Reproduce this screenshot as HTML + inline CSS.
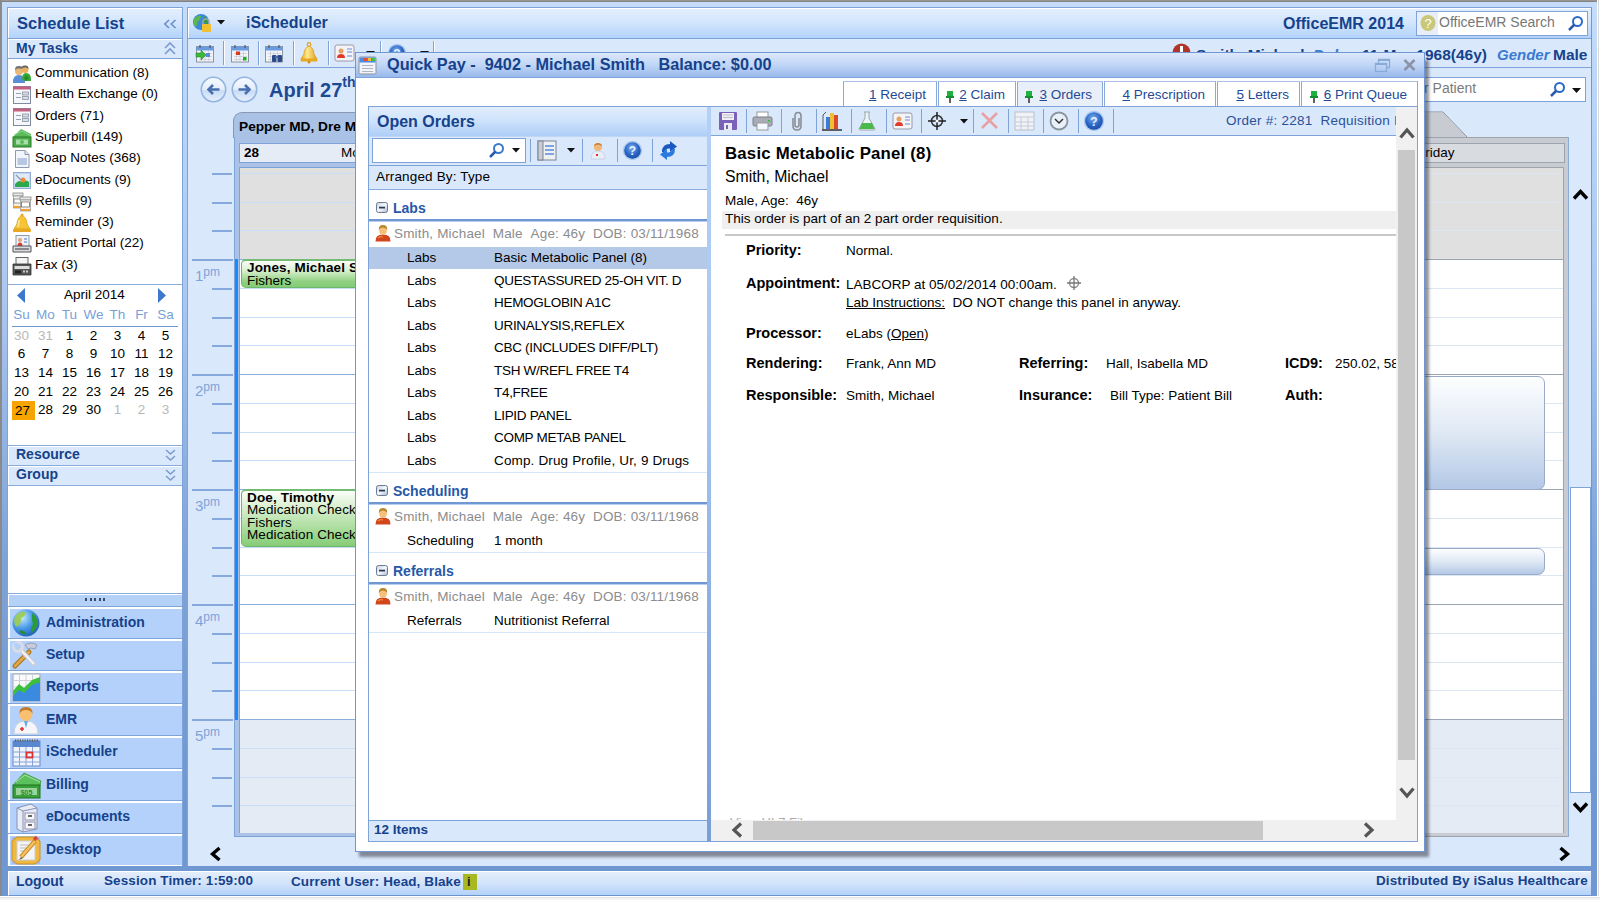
<!DOCTYPE html>
<html><head><meta charset="utf-8">
<style>
*{box-sizing:border-box;margin:0;padding:0}
html,body{width:1600px;height:900px;overflow:hidden}
body{position:relative;background:linear-gradient(#c5ddfa 0px,#b9d5f8 100px,#a9c7f0 300px,#7ea3d8 560px,#6f97d2 800px);font-family:"Liberation Sans",sans-serif;font-size:13px;color:#000}
.a{position:absolute}
.b{font-weight:bold}
.db{color:#15428b}
.nw{white-space:nowrap}
/* frame */
#frameL{left:0;top:0;width:2px;height:900px;background:#8a8a8a}
#frameT{left:0;top:0;width:1598px;height:2px;background:linear-gradient(#a0a0a0,#7a7a7a)}
#frameR{left:1597px;top:0;width:3px;height:900px;background:linear-gradient(90deg,#fff 0 1px,#d8d8d8 1px 2px,#fff 2px)}
.hdrgrad{background:linear-gradient(#e2eefd,#d4e6fc 45%,#b2d2fb)}
</style></head><body>
<div class="a" id="frameT"></div><div class="a" id="frameL"></div><div class="a" id="frameR"></div>


<!-- LEFT PANEL -->
<div class="a" style="left:7px;top:7px;width:176px;height:859px;background:#fff;border:1px solid #7ea3d8;border-bottom:none"></div>
<div class="a hdrgrad" style="left:8px;top:8px;width:174px;height:30px;border-top:1px solid #fff;border-left:1px solid #fff"></div>
<div class="a b db nw" style="left:17px;top:13px;font-size:16.5px;line-height:20px">Schedule List</div>
<svg class="a" style="left:163px;top:19px" width="15" height="10"><path d="M6 1 L1.8 5 L6 9 M12.5 1 L8.3 5 L12.5 9" stroke="#6d90cc" stroke-width="1.7" fill="none"/></svg>
<div class="a" style="left:8px;top:38px;width:174px;height:1px;background:#7ea3d8"></div>
<div class="a" style="left:8px;top:39px;width:174px;height:19px;background:#dae8fb;border-top:1px solid #fff;border-left:1px solid #fff"></div>
<div class="a b db nw" style="left:16px;top:40px;font-size:14px;line-height:17px">My Tasks</div>
<svg class="a" style="left:163px;top:42px" width="14" height="14"><path d="M2 6 L7 1 L12 6 M2 12 L7 7 L12 12" stroke="#7a9ad0" stroke-width="1.6" fill="none"/></svg>
<div class="a" style="left:8px;top:58px;width:174px;height:1px;background:#7ea3d8"></div>
<svg class="a" style="left:12px;top:63.5px" width="20" height="20"><circle cx="7" cy="7" r="4" fill="#e8b878"/><path d="M3 6 Q3 1.5 7 2 Q11 1.5 11 6 Q9 4 7 4.5 Q5 4 3 6Z" fill="#777"/><path d="M1 19 Q0.5 11 7 11 Q13 11 13 19Z" fill="#5a8ed8"/><circle cx="13" cy="5.5" r="3.5" fill="#e8b060"/><path d="M9.5 5 Q9.5 1 13 1.5 Q16.5 1 16.5 5 Q15 3 13 3.5 Q11 3 9.5 5Z" fill="#666"/><path d="M10 15 Q10 9 14 9 Q19 9 19 15 L19 17 L12 17Z" fill="#38a838"/><path d="M14 11 L17 14 L14 17 L12 14Z" fill="#2a8a2a"/></svg><div class="a nw" style="left:35px;top:64px;font-size:13.5px;line-height:17px">Communication (8)</div>
<svg class="a" style="left:12px;top:84.5px" width="20" height="20"><rect x="1.5" y="1.5" width="17" height="17" fill="#f6f7fa" stroke="#7d8aa0"/><rect x="1.5" y="1.5" width="17" height="3" fill="#c4607e"/><path d="M4 8.5H9M4 12.5H9" stroke="#9aa2b0" stroke-width="1.2"/><rect x="10.5" y="7" width="6" height="3" fill="#d8dde6" stroke="#8a94a4" stroke-width="0.8"/><rect x="10.5" y="11.5" width="6" height="3" fill="#d8dde6" stroke="#8a94a4" stroke-width="0.8"/></svg><div class="a nw" style="left:35px;top:85px;font-size:13.5px;line-height:17px">Health Exchange (0)</div>
<svg class="a" style="left:12px;top:106.5px" width="20" height="20"><rect x="1.5" y="1.5" width="17" height="17" fill="#f6f7fa" stroke="#7d8aa0"/><rect x="1.5" y="1.5" width="17" height="3" fill="#c4607e"/><path d="M4 8.5H9M4 12.5H9" stroke="#9aa2b0" stroke-width="1.2"/><rect x="10.5" y="7" width="6" height="3" fill="#d8dde6" stroke="#8a94a4" stroke-width="0.8"/><rect x="10.5" y="11.5" width="6" height="3" fill="#d8dde6" stroke="#8a94a4" stroke-width="0.8"/></svg><div class="a nw" style="left:35px;top:107px;font-size:13.5px;line-height:17px">Orders (71)</div>
<svg class="a" style="left:12px;top:127.5px" width="20" height="20"><path d="M1 9 L9 1 L19 6 L19 12 L1 12Z" fill="#5cba5c"/><path d="M2 7 L10 3 L19 8" stroke="#8ad88a" fill="none"/><rect x="1" y="9" width="18" height="10" fill="#4aaa4a" stroke="#2a7a2a" stroke-width="1"/><rect x="4" y="11.5" width="12" height="5" fill="#a8dca8"/><circle cx="10" cy="14" r="2" fill="#5cba5c"/></svg><div class="a nw" style="left:35px;top:128px;font-size:13.5px;line-height:17px">Superbill (149)</div>
<svg class="a" style="left:12px;top:148.5px" width="20" height="20"><path d="M3.5 1.5 L13 1.5 L17 5.5 L17 18.5 L3.5 18.5Z" fill="#f2f5fa" stroke="#8c9ab2"/><path d="M13 1.5 V5.5 H17" fill="#dde4f0" stroke="#8c9ab2"/><rect x="5.5" y="9" width="9.5" height="7" fill="#b8c8e2"/></svg><div class="a nw" style="left:35px;top:149px;font-size:13.5px;line-height:17px">Soap Notes (368)</div>
<svg class="a" style="left:12px;top:170.5px" width="20" height="20"><rect x="1.5" y="1.5" width="17" height="16" fill="#c4d6f0" stroke="#94aed8"/><rect x="3" y="3" width="14" height="13" fill="#e0eaf6"/><path d="M3 13 Q7 8 10 11 Q14 8 17 11 V16 H3Z" fill="#2aa84a"/><circle cx="11" cy="9" r="2.5" fill="#f08a30"/><path d="M4 4 L9 9" stroke="#8a9ab0" stroke-width="1.2"/></svg><div class="a nw" style="left:35px;top:171px;font-size:13.5px;line-height:17px">eDocuments (9)</div>
<svg class="a" style="left:12px;top:191.5px" width="20" height="20"><rect x="1" y="1" width="10" height="3" fill="#e8e8e8" stroke="#888" stroke-width="0.8"/><rect x="1.5" y="4" width="9" height="12" fill="#f4f0e8" stroke="#999" stroke-width="0.8"/><rect x="2" y="7" width="8" height="4" fill="#fff" stroke="#555" stroke-width="0.6"/><rect x="2" y="14" width="8" height="2" fill="#f0a030"/><rect x="8" y="5" width="11" height="3" fill="#e8e8e8" stroke="#888" stroke-width="0.8"/><rect x="8.5" y="8" width="10" height="11" fill="#f4f0e8" stroke="#999" stroke-width="0.8"/><rect x="9.5" y="10" width="8" height="5" fill="#fff" stroke="#444" stroke-width="0.6"/><rect x="9" y="17" width="9" height="2" fill="#f0a030"/></svg><div class="a nw" style="left:35px;top:192px;font-size:13.5px;line-height:17px">Refills (9)</div>
<svg class="a" style="left:12px;top:212.5px" width="20" height="20"><path d="M10 2 Q5 5 5 11 L2 16 L18 16 L15 11 Q15 5 10 2Z" fill="#f6c434" stroke="#dca020" stroke-width="0.8"/><rect x="1" y="16" width="18" height="3" rx="1" fill="#e8a824"/><circle cx="10" cy="2" r="1.5" fill="#e8a824"/><path d="M7 7 Q7 12 6 14" stroke="#fde9a0" stroke-width="1.5" fill="none"/></svg><div class="a nw" style="left:35px;top:213px;font-size:13.5px;line-height:17px">Reminder (3)</div>
<svg class="a" style="left:12px;top:233.5px" width="20" height="20"><rect x="4" y="1.5" width="13" height="12" fill="#eef2f8" stroke="#8a9ab0"/><circle cx="8" cy="6" r="2" fill="#e8a070"/><path d="M5.5 12 Q5.5 8.5 8 8.5 Q10.5 8.5 10.5 12Z" fill="#d8402a"/><path d="M12 5H15M12 8H15" stroke="#4a7ad0"/><path d="M1 12 H19 V18 H1Z" fill="#d8dce2" stroke="#555" stroke-width="1"/><rect x="3" y="14" width="14" height="2" fill="#888"/></svg><div class="a nw" style="left:35px;top:234px;font-size:13.5px;line-height:17px">Patient Portal (22)</div>
<svg class="a" style="left:12px;top:255.5px" width="20" height="20"><rect x="4" y="1.5" width="12" height="7" fill="#f4f4f4" stroke="#666"/><path d="M1 8 H19 V19 H1Z" fill="#555" stroke="#333" stroke-width="0.8"/><rect x="2.5" y="10" width="15" height="3" fill="#ddd"/><rect x="3" y="14.5" width="6" height="3" fill="#222"/><rect x="11" y="14.5" width="2" height="2" fill="#ccc"/><rect x="14" y="14.5" width="2" height="2" fill="#ccc"/></svg><div class="a nw" style="left:35px;top:256px;font-size:13.5px;line-height:17px">Fax (3)</div>
<div class="a" style="left:8px;top:284px;width:174px;height:1px;background:#8aacdc"></div>
<svg class="a" style="left:16px;top:288px" width="10" height="15"><path d="M9 0 L1 7.5 L9 15Z" fill="#3d78cc"/></svg>
<svg class="a" style="left:157px;top:288px" width="10" height="15"><path d="M1 0 L9 7.5 L1 15Z" fill="#3d78cc"/></svg>
<div class="a nw" style="left:64px;top:287px;font-size:13.5px;line-height:16px">April 2014</div>
<div class="a" style="left:12px;top:326px;width:166px;height:1px;background:#6f97d2"></div>
<div class="a nw" style="left:9.5px;top:307px;width:24px;text-align:center;font-size:13.5px;line-height:16px;color:#7a9fd8">Su</div><div class="a nw" style="left:33.5px;top:307px;width:24px;text-align:center;font-size:13.5px;line-height:16px;color:#7a9fd8">Mo</div><div class="a nw" style="left:57.5px;top:307px;width:24px;text-align:center;font-size:13.5px;line-height:16px;color:#7a9fd8">Tu</div><div class="a nw" style="left:81.5px;top:307px;width:24px;text-align:center;font-size:13.5px;line-height:16px;color:#7a9fd8">We</div><div class="a nw" style="left:105.5px;top:307px;width:24px;text-align:center;font-size:13.5px;line-height:16px;color:#7a9fd8">Th</div><div class="a nw" style="left:129.5px;top:307px;width:24px;text-align:center;font-size:13.5px;line-height:16px;color:#7a9fd8">Fr</div><div class="a nw" style="left:153.5px;top:307px;width:24px;text-align:center;font-size:13.5px;line-height:16px;color:#7a9fd8">Sa</div><div class="a nw" style="left:10.0px;top:325.5px;width:23px;height:19px;text-align:center;font-size:13.5px;line-height:19px;color:#b8b8b8;">30</div><div class="a nw" style="left:34.0px;top:325.5px;width:23px;height:19px;text-align:center;font-size:13.5px;line-height:19px;color:#b8b8b8;">31</div><div class="a nw" style="left:58.0px;top:325.5px;width:23px;height:19px;text-align:center;font-size:13.5px;line-height:19px;color:#000;">1</div><div class="a nw" style="left:82.0px;top:325.5px;width:23px;height:19px;text-align:center;font-size:13.5px;line-height:19px;color:#000;">2</div><div class="a nw" style="left:106.0px;top:325.5px;width:23px;height:19px;text-align:center;font-size:13.5px;line-height:19px;color:#000;">3</div><div class="a nw" style="left:130.0px;top:325.5px;width:23px;height:19px;text-align:center;font-size:13.5px;line-height:19px;color:#000;">4</div><div class="a nw" style="left:154.0px;top:325.5px;width:23px;height:19px;text-align:center;font-size:13.5px;line-height:19px;color:#000;">5</div>
<div class="a nw" style="left:10.0px;top:344.2px;width:23px;height:19px;text-align:center;font-size:13.5px;line-height:19px;color:#000;">6</div><div class="a nw" style="left:34.0px;top:344.2px;width:23px;height:19px;text-align:center;font-size:13.5px;line-height:19px;color:#000;">7</div><div class="a nw" style="left:58.0px;top:344.2px;width:23px;height:19px;text-align:center;font-size:13.5px;line-height:19px;color:#000;">8</div><div class="a nw" style="left:82.0px;top:344.2px;width:23px;height:19px;text-align:center;font-size:13.5px;line-height:19px;color:#000;">9</div><div class="a nw" style="left:106.0px;top:344.2px;width:23px;height:19px;text-align:center;font-size:13.5px;line-height:19px;color:#000;">10</div><div class="a nw" style="left:130.0px;top:344.2px;width:23px;height:19px;text-align:center;font-size:13.5px;line-height:19px;color:#000;">11</div><div class="a nw" style="left:154.0px;top:344.2px;width:23px;height:19px;text-align:center;font-size:13.5px;line-height:19px;color:#000;">12</div>
<div class="a nw" style="left:10.0px;top:362.9px;width:23px;height:19px;text-align:center;font-size:13.5px;line-height:19px;color:#000;">13</div><div class="a nw" style="left:34.0px;top:362.9px;width:23px;height:19px;text-align:center;font-size:13.5px;line-height:19px;color:#000;">14</div><div class="a nw" style="left:58.0px;top:362.9px;width:23px;height:19px;text-align:center;font-size:13.5px;line-height:19px;color:#000;">15</div><div class="a nw" style="left:82.0px;top:362.9px;width:23px;height:19px;text-align:center;font-size:13.5px;line-height:19px;color:#000;">16</div><div class="a nw" style="left:106.0px;top:362.9px;width:23px;height:19px;text-align:center;font-size:13.5px;line-height:19px;color:#000;">17</div><div class="a nw" style="left:130.0px;top:362.9px;width:23px;height:19px;text-align:center;font-size:13.5px;line-height:19px;color:#000;">18</div><div class="a nw" style="left:154.0px;top:362.9px;width:23px;height:19px;text-align:center;font-size:13.5px;line-height:19px;color:#000;">19</div>
<div class="a nw" style="left:10.0px;top:381.6px;width:23px;height:19px;text-align:center;font-size:13.5px;line-height:19px;color:#000;">20</div><div class="a nw" style="left:34.0px;top:381.6px;width:23px;height:19px;text-align:center;font-size:13.5px;line-height:19px;color:#000;">21</div><div class="a nw" style="left:58.0px;top:381.6px;width:23px;height:19px;text-align:center;font-size:13.5px;line-height:19px;color:#000;">22</div><div class="a nw" style="left:82.0px;top:381.6px;width:23px;height:19px;text-align:center;font-size:13.5px;line-height:19px;color:#000;">23</div><div class="a nw" style="left:106.0px;top:381.6px;width:23px;height:19px;text-align:center;font-size:13.5px;line-height:19px;color:#000;">24</div><div class="a nw" style="left:130.0px;top:381.6px;width:23px;height:19px;text-align:center;font-size:13.5px;line-height:19px;color:#000;">25</div><div class="a nw" style="left:154.0px;top:381.6px;width:23px;height:19px;text-align:center;font-size:13.5px;line-height:19px;color:#000;">26</div>
<div class="a nw" style="left:12px;top:400.5px;width:23px;height:19px;text-align:center;font-size:13.5px;line-height:19px;color:#000;background:#f7a400;padding-right:2px;">27</div><div class="a nw" style="left:34.0px;top:400.3px;width:23px;height:19px;text-align:center;font-size:13.5px;line-height:19px;color:#000;">28</div><div class="a nw" style="left:58.0px;top:400.3px;width:23px;height:19px;text-align:center;font-size:13.5px;line-height:19px;color:#000;">29</div><div class="a nw" style="left:82.0px;top:400.3px;width:23px;height:19px;text-align:center;font-size:13.5px;line-height:19px;color:#000;">30</div><div class="a nw" style="left:106.0px;top:400.3px;width:23px;height:19px;text-align:center;font-size:13.5px;line-height:19px;color:#b8b8b8;">1</div><div class="a nw" style="left:130.0px;top:400.3px;width:23px;height:19px;text-align:center;font-size:13.5px;line-height:19px;color:#b8b8b8;">2</div><div class="a nw" style="left:154.0px;top:400.3px;width:23px;height:19px;text-align:center;font-size:13.5px;line-height:19px;color:#b8b8b8;">3</div>

<div class="a" style="left:8px;top:445px;width:174px;height:1px;background:#8aacdc"></div>
<div class="a" style="left:8px;top:446px;width:174px;height:19px;background:#dae8fb;border-top:1px solid #fff;border-left:1px solid #fff"></div>
<div class="a b db nw" style="left:16px;top:446px;font-size:14px;line-height:17px">Resource</div>
<div class="a" style="left:8px;top:465px;width:174px;height:1px;background:#8aacdc"></div>
<div class="a" style="left:8px;top:466px;width:174px;height:19px;background:#dae8fb;border-top:1px solid #fff;border-left:1px solid #fff"></div>
<div class="a b db nw" style="left:16px;top:466px;font-size:14px;line-height:17px">Group</div>
<div class="a" style="left:8px;top:485px;width:174px;height:1px;background:#8aacdc"></div>
<svg class="a" style="left:164px;top:448px" width="13" height="14"><path d="M2 2 L6.5 6 L11 2 M2 8 L6.5 12 L11 8" stroke="#7a9ad0" stroke-width="1.5" fill="none"/></svg>
<svg class="a" style="left:164px;top:468px" width="13" height="14"><path d="M2 2 L6.5 6 L11 2 M2 8 L6.5 12 L11 8" stroke="#7a9ad0" stroke-width="1.5" fill="none"/></svg>
<div class="a" style="left:8px;top:593px;width:174px;height:1px;background:#8aacdc"></div>
<div class="a" style="left:8px;top:594px;width:174px;height:12px;background:#b4d1f8;border-top:1px solid #fff;border-left:1px solid #fff"></div>
<div class="a" style="left:85px;top:598px;width:22px;height:3px;background:repeating-linear-gradient(90deg,#3a4a6a 0 2px,transparent 2px 4.5px)"></div>
<div class="a" style="left:8px;top:606px;width:174px;height:1px;background:#7ea3d8"></div><div class="a" style="left:8px;top:607px;width:174px;height:31px;background:#b3d1fa;border-top:2px solid #fff;border-left:2px solid #fff"></div><svg class="a" style="left:11px;top:608px" width="31" height="31"><defs><radialGradient id="gl" cx="0.35" cy="0.3" r="0.8"><stop offset="0" stop-color="#c8ecff"/><stop offset="0.5" stop-color="#4a9ae8"/><stop offset="1" stop-color="#1a5ab0"/></radialGradient></defs><circle cx="15" cy="15" r="13.5" fill="url(#gl)"/><path d="M4 9 Q8 3 14 4 Q15 7 12 9 Q9 10 10 14 Q8 18 5 19 Q2 14 4 9Z" fill="#9ccc4a" opacity="0.9"/><path d="M21 5 Q27 9 27 17 Q24 22 21 25 Q19 20 22 16 Q20 11 21 5Z" fill="#2a9a3a"/><path d="M8 24 Q12 27 16 26 Q14 23 10 22Z" fill="#2a8a3a"/></svg><div class="a b db nw" style="left:46px;top:614px;font-size:14px;line-height:17px">Administration</div>
<div class="a" style="left:8px;top:638px;width:174px;height:1px;background:#7ea3d8"></div><div class="a" style="left:8px;top:639px;width:174px;height:31px;background:#b3d1fa;border-top:2px solid #fff;border-left:2px solid #fff"></div><svg class="a" style="left:11px;top:640px" width="31" height="31"><path d="M4 26 L18 12" stroke="#b07820" stroke-width="5" stroke-linecap="round"/><path d="M4 26 L18 12" stroke="#e0a848" stroke-width="2.5" stroke-linecap="round"/><path d="M14 5 Q20 1 26 5 L24 9 Q20 7 17 9Z" fill="#c8ccdc" stroke="#8a90a8" stroke-width="0.8"/><path d="M9 9 L23 24" stroke="#c8ccd8" stroke-width="4.5" stroke-linecap="round"/><path d="M9 9 L23 24" stroke="#f4f4f8" stroke-width="2"/><circle cx="7" cy="7" r="4.5" fill="none" stroke="#d8dce8" stroke-width="3"/><rect x="3" y="3" width="4" height="4" fill="#b3d1fa"/></svg><div class="a b db nw" style="left:46px;top:646px;font-size:14px;line-height:17px">Setup</div>
<div class="a" style="left:8px;top:670px;width:174px;height:1px;background:#7ea3d8"></div><div class="a" style="left:8px;top:671px;width:174px;height:32px;background:#b3d1fa;border-top:2px solid #fff;border-left:2px solid #fff"></div><svg class="a" style="left:11px;top:672px" width="31" height="31"><rect x="2" y="2" width="27" height="27" fill="#fafafa" stroke="#a8aab0"/><path d="M2 8.5H29M2 15H29M2 21.5H29M8.5 2V29M15 2V29M21.5 2V29" stroke="#d0d2d8"/><path d="M2 22 L8 16 L13 19 L21 11 L29 9 V29 H2Z" fill="#3a8ae0"/><path d="M2 19 L8 12 L13 16 L21 8 L29 5 L29 10 L21 13 L13 21 L8 18 L2 24Z" fill="#3cc03c"/></svg><div class="a b db nw" style="left:46px;top:678px;font-size:14px;line-height:17px">Reports</div>
<div class="a" style="left:8px;top:703px;width:174px;height:1px;background:#7ea3d8"></div><div class="a" style="left:8px;top:704px;width:174px;height:31px;background:#b3d1fa;border-top:2px solid #fff;border-left:2px solid #fff"></div><svg class="a" style="left:11px;top:705px" width="31" height="31"><path d="M3 29 Q3 16 15 16 Q27 16 27 29Z" fill="#f4f6fa" stroke="#c8d0dc"/><path d="M13 16 L15 23 L17 16Z" fill="#6aa8e8"/><circle cx="15" cy="9.5" r="6.5" fill="#f8c070"/><path d="M8.5 9 Q8 2 15 2 Q22 2 21.5 9 Q20 5 15 5 Q10 5 8.5 9Z" fill="#c07a28"/><path d="M9 24 H13 M11 22 V26" stroke="#e03030" stroke-width="1.6"/></svg><div class="a b db nw" style="left:46px;top:711px;font-size:14px;line-height:17px">EMR</div>
<div class="a" style="left:8px;top:735px;width:174px;height:1px;background:#7ea3d8"></div><div class="a" style="left:8px;top:736px;width:174px;height:32px;background:#b3d1fa;border-top:2px solid #fff;border-left:2px solid #fff"></div><svg class="a" style="left:11px;top:737px" width="31" height="31"><rect x="2" y="4" width="27" height="25" fill="#f0f4fc" stroke="#6a8ac8"/><rect x="2" y="4" width="27" height="6" fill="#5a88d0"/><path d="M4 3.5H27" stroke="#555" stroke-dasharray="1.2 1.2" stroke-width="2"/><path d="M2 15H29M2 20H29M2 25H29M8.5 10V29M15 10V29M21.5 10V29" stroke="#8aa4d8"/><rect x="15.5" y="15.5" width="6" height="5" fill="none" stroke="#e03030" stroke-width="1.8"/></svg><div class="a b db nw" style="left:46px;top:743px;font-size:14px;line-height:17px">iScheduler</div>
<div class="a" style="left:8px;top:768px;width:174px;height:1px;background:#7ea3d8"></div><div class="a" style="left:8px;top:769px;width:174px;height:31px;background:#b3d1fa;border-top:2px solid #fff;border-left:2px solid #fff"></div><svg class="a" style="left:11px;top:770px" width="31" height="31"><path d="M3 14 L13 3 L30 11 L28 20 L3 20Z" fill="#5cc05c" stroke="#3a9a3a" stroke-width="0.8"/><path d="M5 12 L14 5 L29 12" stroke="#a8e0a8" fill="none"/><rect x="2" y="15" width="27" height="13" fill="#3aa03a" stroke="#1e701e"/><rect x="5" y="18" width="21" height="7" fill="#9ad49a"/><text x="15.5" y="24.5" font-family="Liberation Sans" font-size="7" font-weight="bold" fill="#2a8a2a" text-anchor="middle">$05</text></svg><div class="a b db nw" style="left:46px;top:776px;font-size:14px;line-height:17px">Billing</div>
<div class="a" style="left:8px;top:800px;width:174px;height:1px;background:#7ea3d8"></div><div class="a" style="left:8px;top:801px;width:174px;height:32px;background:#b3d1fa;border-top:2px solid #fff;border-left:2px solid #fff"></div><svg class="a" style="left:11px;top:802px" width="31" height="31"><path d="M6 6 L20 2 L26 6 L26 27 L12 30 L6 27Z" fill="#e8ecf6" stroke="#8a90b0"/><path d="M6 6 L12 9 L26 6 M12 9 V30" stroke="#8a90b0" fill="none"/><rect x="14" y="11" width="10" height="7" fill="#f8f8fc" stroke="#8a90b0"/><rect x="14" y="20" width="10" height="7" fill="#f8f8fc" stroke="#8a90b0"/><rect x="17" y="13" width="4" height="2" fill="#666"/><rect x="17" y="22" width="4" height="2" fill="#666"/></svg><div class="a b db nw" style="left:46px;top:808px;font-size:14px;line-height:17px">eDocuments</div>
<div class="a" style="left:8px;top:833px;width:174px;height:1px;background:#7ea3d8"></div><div class="a" style="left:8px;top:834px;width:174px;height:31px;background:#b3d1fa;border-top:2px solid #fff;border-left:2px solid #fff"></div><svg class="a" style="left:11px;top:835px" width="31" height="31"><rect x="1" y="2" width="28" height="27" fill="#a8b8e8"/><path d="M1 6 L6 2 H24 L29 6 V25 L24 29 H6 L1 25Z" fill="#f0b840" stroke="#c89020"/><rect x="6" y="6" width="18" height="19" fill="#f4f4f6" stroke="#ccc"/><path d="M9 10H17M9 13H15M9 16H14" stroke="#bbb"/><path d="M10 22 L24 6" stroke="#c88a20" stroke-width="4.5"/><path d="M10 22 L24 6" stroke="#f4c060" stroke-width="2.5"/><path d="M10 22 L8 25 L12 23Z" fill="#555"/><path d="M23 5 L26 2" stroke="#e04040" stroke-width="3.5"/></svg><div class="a b db nw" style="left:46px;top:841px;font-size:14px;line-height:17px">Desktop</div>

<!-- MAIN PANEL -->
<div class="a" style="left:187px;top:7px;width:1405px;height:859px;background:#dae8fc;border:1px solid #7ea3d8;border-right:1px solid #6f97d2;border-bottom:none"></div>
<div class="a hdrgrad" style="left:188px;top:8px;width:1403px;height:30px;border-top:1px solid #fff;border-left:1px solid #fff"></div>
<div class="a" style="left:188px;top:38px;width:1403px;height:1px;background:#7ea3d8"></div>
<svg class="a" style="left:192px;top:13px" width="20" height="20"><circle cx="9" cy="9" r="8" fill="#3a8ad8"/><path d="M2 6 Q5 2 9 3 Q8 8 5 9 Q6 13 3 14 Q1 10 2 6Z" fill="#5cb84a"/><path d="M12 3 Q16 6 16 11 Q13 12 12 9Z" fill="#3a9a3a"/><path d="M11 12 V9 Q11 6 14 6 Q17 6 17 9 V12" fill="none" stroke="#9aa" stroke-width="1.5"/><rect x="10" y="11" width="9" height="8" rx="1" fill="#f0c030"/></svg>
<svg class="a" style="left:217px;top:20px" width="8" height="5"><path d="M0 0 H8 L4 4.5Z" fill="#111"/></svg>
<div class="a b db nw" style="left:246px;top:13px;font-size:16px;line-height:20px">iScheduler</div>
<div class="a b db nw" style="left:1283px;top:14px;font-size:16px;line-height:20px">OfficeEMR 2014</div>
<div class="a" style="left:1416px;top:11px;width:172px;height:25px;background:#fff;border:1px solid #7ea3d8"></div>
<div class="a" style="left:1417px;top:12px;width:21px;height:23px;background:#e8eef8"></div>
<svg class="a" style="left:1419px;top:14px" width="18" height="18"><ellipse cx="9" cy="9" rx="7.5" ry="8" fill="#c8c878"/><text x="9" y="14" font-family="Liberation Sans" font-size="13" fill="#fff" text-anchor="middle">?</text></svg>
<div class="a nw" style="left:1439px;top:14px;font-size:14px;line-height:17px;color:#777">OfficeEMR Search</div>
<svg class="a" style="left:1567px;top:15px" width="17" height="17"><circle cx="10.5" cy="6.5" r="4.5" fill="none" stroke="#2a6ac8" stroke-width="2"/><path d="M7.5 9.5 L2 15" stroke="#2a5aa8" stroke-width="2.5"/></svg>
<!-- toolbar -->
<div class="a" style="left:188px;top:39px;width:1403px;height:28px;background:#dae8fc"></div>
<div class="a" style="left:188px;top:67px;width:1403px;height:1px;background:#7ea3d8"></div>
<div class="a" style="left:223px;top:41px;width:1px;height:24px;background:#7ea3d8"></div><div class="a" style="left:224px;top:41px;width:1px;height:24px;background:#fff"></div><div class="a" style="left:258px;top:41px;width:1px;height:24px;background:#7ea3d8"></div><div class="a" style="left:259px;top:41px;width:1px;height:24px;background:#fff"></div><div class="a" style="left:293px;top:41px;width:1px;height:24px;background:#7ea3d8"></div><div class="a" style="left:294px;top:41px;width:1px;height:24px;background:#fff"></div><div class="a" style="left:328px;top:41px;width:1px;height:24px;background:#7ea3d8"></div><div class="a" style="left:329px;top:41px;width:1px;height:24px;background:#fff"></div><div class="a" style="left:380px;top:41px;width:1px;height:24px;background:#7ea3d8"></div><div class="a" style="left:381px;top:41px;width:1px;height:24px;background:#fff"></div><div class="a" style="left:433px;top:41px;width:1px;height:24px;background:#7ea3d8"></div><div class="a" style="left:434px;top:41px;width:1px;height:24px;background:#fff"></div>
<svg class="a" style="left:195px;top:43px" width="20" height="20"><rect x="1.5" y="3.5" width="17" height="15.5" fill="#f2f4f8" stroke="#8a92a4"/><rect x="1.5" y="3.5" width="17" height="4" fill="#6a9ae0"/><path d="M5 2V5M15 2V5" stroke="#555" stroke-width="1.2"/><path d="M4 10.5H17M4 13.5H17M4 16.5H17M6.5 8V19M10 8V19M13.5 8V19" stroke="#c4c8d4" stroke-width="0.7"/><path d="M1 10 L6 10 L6 7 L11 12 L6 17 L6 14 L1 14Z" fill="#3ab83a" stroke="#2a8a2a" stroke-width="0.6"/><rect x="11" y="10" width="4" height="4" fill="#5a8ae0"/></svg>
<svg class="a" style="left:230px;top:43px" width="20" height="20"><rect x="1.5" y="3.5" width="17" height="15.5" fill="#f2f4f8" stroke="#8a92a4"/><rect x="1.5" y="3.5" width="17" height="4" fill="#6a9ae0"/><path d="M5 2V5M15 2V5" stroke="#555" stroke-width="1.2"/><path d="M4 10.5H17M4 13.5H17M4 16.5H17M6.5 8V19M10 8V19M13.5 8V19" stroke="#c4c8d4" stroke-width="0.7"/><rect x="6" y="8.5" width="4" height="3.5" fill="#d83a1a"/><rect x="13" y="14" width="3.5" height="3.5" fill="#20b020"/></svg>
<svg class="a" style="left:264px;top:43px" width="20" height="20"><rect x="1.5" y="3.5" width="17" height="15.5" fill="#f2f4f8" stroke="#8a92a4"/><rect x="1.5" y="3.5" width="17" height="4" fill="#6a9ae0"/><path d="M5 2V5M15 2V5" stroke="#555" stroke-width="1.2"/><path d="M4 10.5H17M4 13.5H17M4 16.5H17M6.5 8V19M10 8V19M13.5 8V19" stroke="#c4c8d4" stroke-width="0.7"/><rect x="8" y="12" width="4.5" height="7" rx="1" fill="#2a4a8a"/><rect x="13.5" y="12" width="4.5" height="7" rx="1" fill="#2a4a8a"/><rect x="11" y="13" width="3" height="2" fill="#4a6aaa"/></svg>
<svg class="a" style="left:299px;top:42px" width="20" height="22"><defs><linearGradient id="bellg" x1="0" x2="1"><stop offset="0" stop-color="#e8a818"/><stop offset="0.4" stop-color="#fde890"/><stop offset="1" stop-color="#e0a010"/></linearGradient></defs><circle cx="10" cy="2.5" r="1.8" fill="none" stroke="#e0a020" stroke-width="1.2"/><path d="M10 4 Q5 6 5 12 L2 17 L18 17 L15 12 Q15 6 10 4Z" fill="url(#bellg)" stroke="#d89818" stroke-width="0.7"/><rect x="1.5" y="17" width="17" height="2.5" rx="1" fill="#e8a820"/><circle cx="10" cy="20" r="1.5" fill="#d89010"/></svg>
<svg class="a" style="left:334px;top:44px" width="21" height="18"><rect x="1" y="1" width="19" height="16" rx="2" fill="#f4f4f6" stroke="#99a"/><circle cx="7" cy="7" r="2.5" fill="#e8a060"/><path d="M3 14 Q3 10 7 10 Q11 10 11 14Z" fill="#e03a2a"/><path d="M13 5H18M13 8H18M13 12H18" stroke="#6a8ad8"/></svg>
<svg class="a" style="left:387px;top:43px" width="20" height="20"><defs><radialGradient id="hg387" cx="0.45" cy="0.35" r="0.7"><stop offset="0" stop-color="#7ab0f0"/><stop offset="0.6" stop-color="#2a64c4"/><stop offset="1" stop-color="#1a4aa0"/></radialGradient></defs><circle cx="10.0" cy="10.0" r="9.2" fill="#a8c8f0"/><circle cx="10.0" cy="10.0" r="7.8" fill="url(#hg387)"/><text x="10.0" y="14.5" font-family="Liberation Sans" font-weight="bold" font-size="12" fill="#e8f0ff" text-anchor="middle">?</text></svg>
<svg class="a" style="left:366px;top:51px" width="9" height="6"><path d="M0 0 H9 L4.5 5Z" fill="#111"/></svg>
<svg class="a" style="left:420px;top:51px" width="9" height="6"><path d="M0 0 H9 L4.5 5Z" fill="#111"/></svg>
<!-- patient bar -->
<svg class="a" style="left:1172px;top:43px" width="19" height="19"><circle cx="9.5" cy="9.5" r="9" fill="#b03428"/><rect x="8" y="3" width="3" height="9" fill="#fff"/></svg>
<div class="a b db nw" style="left:1196px;top:45px;font-size:15.5px;line-height:19px">Smith, Michael</div>
<div class="a b nw" style="left:1313px;top:45px;font-size:15.5px;line-height:19px;color:#3a7ad0;font-style:italic">Dob</div>
<div class="a b db nw" style="right:113px;top:45px;font-size:15.5px;line-height:19px">11-Mar-1968(46y)</div>
<div class="a b nw" style="left:1497px;top:45px;font-size:15px;line-height:19px;color:#3a7ad0;font-style:italic">Gender</div>
<div class="a b db nw" style="left:1553px;top:45px;font-size:15.5px;line-height:19px">Male</div>
<div class="a" style="left:188px;top:67px;width:1403px;height:1px;background:#7ea3d8"></div>
<div class="a" style="left:188px;top:68px;width:1403px;height:1px;background:#fff;opacity:0"></div>
<!-- nav row -->
<svg class="a" style="left:200px;top:76px" width="27" height="27"><defs><linearGradient id="cg" x1="0" y1="0" x2="0" y2="1"><stop offset="0" stop-color="#f8fbff"/><stop offset="0.5" stop-color="#e4eefb"/><stop offset="0.55" stop-color="#c8dcf6"/><stop offset="1" stop-color="#e8f0fc"/></linearGradient></defs><circle cx="13.5" cy="13.5" r="12.2" fill="url(#cg)" stroke="#94b4e0" stroke-width="1.6"/><path d="M19.5 13.5 H9 M13 9 L8.5 13.5 L13 18" stroke="#4a70b0" stroke-width="2.6" fill="none"/></svg>
<svg class="a" style="left:231px;top:76px" width="27" height="27"><circle cx="13.5" cy="13.5" r="12.2" fill="url(#cg)" stroke="#94b4e0" stroke-width="1.6"/><path d="M7.5 13.5 H18 M14 9 L18.5 13.5 L14 18" stroke="#4a70b0" stroke-width="2.6" fill="none"/></svg>
<div class="a b nw" style="left:269px;top:78px;font-size:20px;line-height:24px;color:#1d4a92">April 27<sup style="font-size:14px;vertical-align:10px;line-height:0">th</sup></div>
<div class="a" style="left:1400px;top:77px;width:186px;height:25px;background:#fff;border:1px solid #7ea3d8"></div>
<div class="a nw" style="left:1424px;top:80px;font-size:14px;line-height:17px;color:#7a7a7a">r Patient</div>
<svg class="a" style="left:1549px;top:81px" width="17" height="17"><circle cx="10.5" cy="6.5" r="4.5" fill="none" stroke="#2a6ac8" stroke-width="2"/><path d="M7.5 9.5 L2 15" stroke="#2a5aa8" stroke-width="2.5"/></svg>
<svg class="a" style="left:1572px;top:88px" width="9" height="6"><path d="M0 0 H9 L4.5 5Z" fill="#111"/></svg>

<!-- CALENDAR -->
<div class="a" style="left:233px;top:112px;width:150px;height:26px;background:#a9c2e6;border-top:1px solid #8898b0;border-left:1px solid #8898b0;border-top-left-radius:9px"></div>
<div class="a b nw" style="left:239px;top:119px;font-size:13.7px;line-height:16px">Pepper MD, Dre Mxxxxx</div>
<div class="a" style="left:234px;top:137px;width:1100px;height:700px;background:#a9c2e6;border-left:1px solid #7ea3d8;border-bottom:1px solid #7ea3d8"></div>
<div class="a" style="left:239px;top:143px;width:1100px;height:20px;background:#e6ecf6;border:1px solid #7ea3d8"></div>
<div class="a b nw" style="left:244px;top:145px;font-size:13.5px;line-height:16px">28</div>
<div class="a nw" style="left:341px;top:145px;font-size:13.5px;line-height:16px">Monday</div>
<div class="a" style="left:239px;top:167px;width:1100px;height:666px;background:#fff;border-left:1px solid #7ea3d8;border-top:1px solid #7ea3d8"></div>
<div class="a" style="left:240px;top:168px;width:1100px;height:92px;background:#e0e0e0"></div>
<div class="a" style="left:240px;top:720px;width:1100px;height:113px;background:#e5ebf5"></div>
<!-- right gray column -->
<svg class="a" style="left:1380px;top:111px" width="90" height="28"><path d="M0 1 H63 L88 27" stroke="#8a8e96" stroke-width="1" fill="none"/><path d="M0 1.5 H63 L87.5 27.5 H0Z" fill="#c8cbd1"/></svg>
<div class="a" style="left:1380px;top:137px;width:189px;height:700px;background:#c8cbd1;border-top:1px solid #9ea4ae;border-right:1px solid #8aacdc;border-bottom:1px solid #9ea4ae"></div>
<div class="a" style="left:1380px;top:143px;width:185px;height:20px;background:#d8dbe0;border:1px solid #9ea4ae"></div>
<div class="a nw" style="left:1417px;top:145px;font-size:13.5px;line-height:16px">Friday</div>
<div class="a" style="left:1380px;top:167px;width:184px;height:666px;background:#fff;border-right:1px solid #9ea4ae;border-top:1px solid #9ea4ae"></div>
<div class="a" style="left:1380px;top:168px;width:183px;height:92px;background:#e0e0e0"></div>
<div class="a" style="left:1380px;top:720px;width:183px;height:113px;background:#e5ebf5"></div>
<div class="a" style="left:212px;top:173px;width:20px;height:2px;background:#86a8dc"></div><div class="a" style="left:240px;top:173px;width:1140px;height:1px;background:#c8ddf7"></div><div class="a" style="left:1380px;top:173px;width:183px;height:1px;background:#dce6f4"></div><div class="a" style="left:212px;top:202px;width:20px;height:2px;background:#86a8dc"></div><div class="a" style="left:240px;top:202px;width:1140px;height:1px;background:#c8ddf7"></div><div class="a" style="left:1380px;top:202px;width:183px;height:1px;background:#dce6f4"></div><div class="a" style="left:212px;top:230px;width:20px;height:2px;background:#86a8dc"></div><div class="a" style="left:240px;top:230px;width:1140px;height:1px;background:#c8ddf7"></div><div class="a" style="left:1380px;top:230px;width:183px;height:1px;background:#dce6f4"></div><div class="a" style="left:192px;top:259px;width:41px;height:2px;background:#86a8dc"></div><div class="a" style="left:240px;top:259px;width:1140px;height:1px;background:#8aacdc"></div><div class="a" style="left:1380px;top:259px;width:183px;height:1px;background:#9aa6b8"></div><div class="a" style="left:212px;top:288px;width:20px;height:2px;background:#86a8dc"></div><div class="a" style="left:240px;top:288px;width:1140px;height:1px;background:#c8ddf7"></div><div class="a" style="left:1380px;top:288px;width:183px;height:1px;background:#dce6f4"></div><div class="a" style="left:212px;top:317px;width:20px;height:2px;background:#86a8dc"></div><div class="a" style="left:240px;top:317px;width:1140px;height:1px;background:#c8ddf7"></div><div class="a" style="left:1380px;top:317px;width:183px;height:1px;background:#dce6f4"></div><div class="a" style="left:212px;top:345px;width:20px;height:2px;background:#86a8dc"></div><div class="a" style="left:240px;top:345px;width:1140px;height:1px;background:#c8ddf7"></div><div class="a" style="left:1380px;top:345px;width:183px;height:1px;background:#dce6f4"></div><div class="a" style="left:192px;top:374px;width:41px;height:2px;background:#86a8dc"></div><div class="a" style="left:240px;top:374px;width:1140px;height:1px;background:#8aacdc"></div><div class="a" style="left:1380px;top:374px;width:183px;height:1px;background:#9aa6b8"></div><div class="a" style="left:212px;top:403px;width:20px;height:2px;background:#86a8dc"></div><div class="a" style="left:240px;top:403px;width:1140px;height:1px;background:#c8ddf7"></div><div class="a" style="left:1380px;top:403px;width:183px;height:1px;background:#dce6f4"></div><div class="a" style="left:212px;top:432px;width:20px;height:2px;background:#86a8dc"></div><div class="a" style="left:240px;top:432px;width:1140px;height:1px;background:#c8ddf7"></div><div class="a" style="left:1380px;top:432px;width:183px;height:1px;background:#dce6f4"></div><div class="a" style="left:212px;top:460px;width:20px;height:2px;background:#86a8dc"></div><div class="a" style="left:240px;top:460px;width:1140px;height:1px;background:#c8ddf7"></div><div class="a" style="left:1380px;top:460px;width:183px;height:1px;background:#dce6f4"></div><div class="a" style="left:192px;top:489px;width:41px;height:2px;background:#86a8dc"></div><div class="a" style="left:240px;top:489px;width:1140px;height:1px;background:#8aacdc"></div><div class="a" style="left:1380px;top:489px;width:183px;height:1px;background:#9aa6b8"></div><div class="a" style="left:212px;top:518px;width:20px;height:2px;background:#86a8dc"></div><div class="a" style="left:240px;top:518px;width:1140px;height:1px;background:#c8ddf7"></div><div class="a" style="left:1380px;top:518px;width:183px;height:1px;background:#dce6f4"></div><div class="a" style="left:212px;top:547px;width:20px;height:2px;background:#86a8dc"></div><div class="a" style="left:240px;top:547px;width:1140px;height:1px;background:#c8ddf7"></div><div class="a" style="left:1380px;top:547px;width:183px;height:1px;background:#dce6f4"></div><div class="a" style="left:212px;top:575px;width:20px;height:2px;background:#86a8dc"></div><div class="a" style="left:240px;top:575px;width:1140px;height:1px;background:#c8ddf7"></div><div class="a" style="left:1380px;top:575px;width:183px;height:1px;background:#dce6f4"></div><div class="a" style="left:192px;top:604px;width:41px;height:2px;background:#86a8dc"></div><div class="a" style="left:240px;top:604px;width:1140px;height:1px;background:#8aacdc"></div><div class="a" style="left:1380px;top:604px;width:183px;height:1px;background:#9aa6b8"></div><div class="a" style="left:212px;top:633px;width:20px;height:2px;background:#86a8dc"></div><div class="a" style="left:240px;top:633px;width:1140px;height:1px;background:#c8ddf7"></div><div class="a" style="left:1380px;top:633px;width:183px;height:1px;background:#dce6f4"></div><div class="a" style="left:212px;top:662px;width:20px;height:2px;background:#86a8dc"></div><div class="a" style="left:240px;top:662px;width:1140px;height:1px;background:#c8ddf7"></div><div class="a" style="left:1380px;top:662px;width:183px;height:1px;background:#dce6f4"></div><div class="a" style="left:212px;top:690px;width:20px;height:2px;background:#86a8dc"></div><div class="a" style="left:240px;top:690px;width:1140px;height:1px;background:#c8ddf7"></div><div class="a" style="left:1380px;top:690px;width:183px;height:1px;background:#dce6f4"></div><div class="a" style="left:192px;top:719px;width:41px;height:2px;background:#86a8dc"></div><div class="a" style="left:240px;top:719px;width:1140px;height:1px;background:#8aacdc"></div><div class="a" style="left:1380px;top:719px;width:183px;height:1px;background:#9aa6b8"></div><div class="a" style="left:212px;top:748px;width:20px;height:2px;background:#86a8dc"></div><div class="a" style="left:240px;top:748px;width:1140px;height:1px;background:#c8ddf7"></div><div class="a" style="left:1380px;top:748px;width:183px;height:1px;background:#dce6f4"></div><div class="a" style="left:212px;top:777px;width:20px;height:2px;background:#86a8dc"></div><div class="a" style="left:240px;top:777px;width:1140px;height:1px;background:#c8ddf7"></div><div class="a" style="left:1380px;top:777px;width:183px;height:1px;background:#dce6f4"></div><div class="a" style="left:212px;top:805px;width:20px;height:2px;background:#86a8dc"></div><div class="a" style="left:240px;top:805px;width:1140px;height:1px;background:#c8ddf7"></div><div class="a" style="left:1380px;top:805px;width:183px;height:1px;background:#dce6f4"></div>

<div class="a nw" style="left:195px;top:268px;font-size:15px;line-height:16px;color:#7ea3d8">1<span style="font-size:12px;position:relative;top:-5px">pm</span></div><div class="a nw" style="left:195px;top:383px;font-size:15px;line-height:16px;color:#7ea3d8">2<span style="font-size:12px;position:relative;top:-5px">pm</span></div><div class="a nw" style="left:195px;top:498px;font-size:15px;line-height:16px;color:#7ea3d8">3<span style="font-size:12px;position:relative;top:-5px">pm</span></div><div class="a nw" style="left:195px;top:613px;font-size:15px;line-height:16px;color:#7ea3d8">4<span style="font-size:12px;position:relative;top:-5px">pm</span></div><div class="a nw" style="left:195px;top:728px;font-size:15px;line-height:16px;color:#7ea3d8">5<span style="font-size:12px;position:relative;top:-5px">pm</span></div>
<div class="a" style="left:235px;top:259px;width:3px;height:461px;background:#1a8af8"></div>
<div class="a" style="left:241px;top:259px;width:130px;height:29px;border:1px solid #6ab86a;border-top:2px solid #74bc74;border-radius:5px 0 0 5px;background:linear-gradient(#fbfdf9,#dcf1d2 35%,#8ed07e 80%,#86cc78)"></div>
<div class="a b nw" style="left:247px;top:261px;font-size:13.5px;line-height:14px;letter-spacing:0.15px">Jones, Michael S</div>
<div class="a nw" style="left:247px;top:274px;font-size:13.5px;line-height:14px">Fishers</div>
<div class="a" style="left:241px;top:489px;width:130px;height:58px;border:1px solid #6ab86a;border-top:2px solid #74bc74;border-radius:5px 0 0 5px;background:linear-gradient(#fbfdf9,#e4f4dc 20%,#a8dc9a 70%,#86cc78)"></div>
<div class="a b nw" style="left:247px;top:491px;font-size:13.5px;line-height:13px;letter-spacing:0.15px">Doe, Timothy</div>
<div class="a nw" style="left:247px;top:504px;font-size:13.5px;line-height:12.6px;letter-spacing:0.1px">Medication Check<br>Fishers<br>Medication Check</div>
<div class="a" style="left:1380px;top:376px;width:165px;height:114px;border:1px solid #9aabc8;border-radius:0 7px 7px 0;background:linear-gradient(#fdfeff,#dfe8f4 50%,#b3c8e6)"></div>
<div class="a" style="left:1380px;top:548px;width:165px;height:27px;border:1px solid #9aabc8;border-radius:0 7px 7px 0;background:linear-gradient(#fdfeff,#dfe8f4 50%,#b3c8e6)"></div>
<!-- main vertical scroll -->
<div class="a" style="left:1570px;top:487px;width:21px;height:306px;background:#fff;border:1px solid #7ea3d8"></div>
<svg class="a" style="left:1572px;top:188px" width="17" height="13"><path d="M2 10.5 L8.5 3.5 L15 10.5" stroke="#000" stroke-width="3.4" fill="none"/></svg>
<svg class="a" style="left:1572px;top:801px" width="17" height="13"><path d="M2 2.5 L8.5 9.5 L15 2.5" stroke="#000" stroke-width="3.4" fill="none"/></svg>
<svg class="a" style="left:209px;top:846px" width="13" height="16"><path d="M10.5 2 L3.5 8 L10.5 14" stroke="#000" stroke-width="3.4" fill="none"/></svg>
<svg class="a" style="left:1558px;top:846px" width="13" height="16"><path d="M2.5 2 L9.5 8 L2.5 14" stroke="#000" stroke-width="3.4" fill="none"/></svg>

<!-- STATUS -->
<div class="a" style="left:2px;top:2px;width:0;height:0"></div>
<div class="a" style="left:8px;top:871px;width:1583px;height:25px;background:linear-gradient(#e4eefc,#d2e3fb 50%,#b4d2fa);border-top:1px solid #fff;border-left:1px solid #fff;border-bottom:1px solid #6b93cd"></div>
<div class="a" style="left:0;top:896px;width:1600px;height:4px;background:linear-gradient(#fff 0 1px,#e2e2e2 1px 2px,#f4f4f4 2px)"></div>
<div class="a b db nw" style="left:16px;top:872px;font-size:14px;line-height:18px">Logout</div>
<div class="a b db nw" style="left:104px;top:872px;font-size:13.5px;line-height:18px;letter-spacing:0.1px">Session Timer: 1:59:00</div>
<div class="a b db nw" style="left:291px;top:873px;font-size:13.5px;line-height:18px;letter-spacing:0.1px">Current User: Head, Blake</div>
<div class="a" style="left:463px;top:874px;width:14px;height:16px;background:#a8b820"></div>
<div class="a b nw" style="left:467px;top:874px;font-size:13px;line-height:16px;color:#222">i</div>
<div class="a b db nw" style="left:1376px;top:872px;font-size:13.5px;line-height:18px;letter-spacing:0.1px">Distributed By iSalus Healthcare</div>

<!-- DIALOG -->
<div class="a" style="left:359px;top:60px;width:1070px;height:797px;background:rgba(40,40,50,0.5);filter:blur(1.5px)"></div>
<div class="a" style="left:355px;top:52px;width:1070px;height:800px;background:#fff;border:1px solid #6f97d2"></div>
<div class="a" style="left:356px;top:53px;width:1068px;height:25px;background:linear-gradient(#dce8fb,#c0d6f6 50%,#98b9ec);border-bottom:1px solid #7ea3d8"></div>
<svg class="a" style="left:358px;top:56px" width="19" height="19"><rect x="1" y="1" width="17" height="17" rx="1.5" fill="#f2f4f8" stroke="#8a92a0"/><rect x="1.5" y="1.5" width="16" height="5" fill="#4a8ae0"/><rect x="6" y="2" width="3" height="3" fill="#e84a3a"/><rect x="10" y="2" width="3" height="3" fill="#f0c030"/><rect x="14" y="2" width="3" height="3" fill="#4ac04a"/><path d="M4 9.5H15M4 12.5H15M4 15.5H15" stroke="#9aa4b8" stroke-width="0.8"/></svg>
<div class="a b db nw" style="left:387px;top:54px;font-size:16.3px;line-height:20px">Quick Pay - &nbsp;9402 - Michael Smith &nbsp;&nbsp;Balance: $0.00</div>
<svg class="a" style="left:1374px;top:57px" width="18" height="16"><rect x="1.5" y="6.5" width="11" height="8" fill="none" stroke="#8aaad8" stroke-width="1.3"/><path d="M4.5 6.5V2.5H15.5V10.5H12.5" fill="none" stroke="#8aaad8" stroke-width="1.3"/><path d="M1.5 7.5H12.5M4.5 3.5H15.5" stroke="#8aaad8" stroke-width="1"/></svg>
<svg class="a" style="left:1403px;top:59px" width="13" height="12"><path d="M1.5 1 L11.5 11 M11.5 1 L1.5 11" stroke="#8a94a6" stroke-width="2.6"/></svg>
<!-- tabs -->
<div class="a" style="left:843px;top:81px;width:94px;height:26px;background:#fff;border:1px solid #8aaadc;border-bottom:none;border-top-color:#a8c0e8"></div><div class="a nw" style="right:674px;top:86px;font-size:13.5px;line-height:18px;color:#1f4a94"><span style="text-decoration:underline">1</span> Receipt</div><div class="a" style="left:938px;top:81px;width:78px;height:26px;background:#fff;border:1px solid #8aaadc;border-bottom:none;border-top-color:#a8c0e8"></div><div class="a nw" style="right:595px;top:86px;font-size:13.5px;line-height:18px;color:#1f4a94"><span style="text-decoration:underline">2</span> Claim</div><div class="a" style="left:1017px;top:81px;width:86px;height:26px;background:#e9eff8;border:1px solid #8aaadc;border-bottom:none;border-top-color:#a8c0e8"></div><div class="a nw" style="right:508px;top:86px;font-size:13.5px;line-height:18px;color:#1f4a94"><span style="text-decoration:underline">3</span> Orders</div><div class="a" style="left:1104px;top:81px;width:112px;height:26px;background:#fff;border:1px solid #8aaadc;border-bottom:none;border-top-color:#a8c0e8"></div><div class="a nw" style="right:395px;top:86px;font-size:13.5px;line-height:18px;color:#1f4a94"><span style="text-decoration:underline">4</span> Prescription</div><div class="a" style="left:1217px;top:81px;width:83px;height:26px;background:#fff;border:1px solid #8aaadc;border-bottom:none;border-top-color:#a8c0e8"></div><div class="a nw" style="right:311px;top:86px;font-size:13.5px;line-height:18px;color:#1f4a94"><span style="text-decoration:underline">5</span> Letters</div><div class="a" style="left:1301px;top:81px;width:117px;height:26px;background:#fff;border:1px solid #8aaadc;border-bottom:none;border-top-color:#a8c0e8"></div><div class="a nw" style="right:193px;top:86px;font-size:13.5px;line-height:18px;color:#1f4a94"><span style="text-decoration:underline">6</span> Print Queue</div>
<svg class="a" style="left:945px;top:90px" width="10" height="13"><rect x="2" y="1" width="6" height="6" fill="#20b040"/><rect x="1" y="6" width="8" height="2" fill="#109030"/><rect x="4.3" y="8" width="1.4" height="5" fill="#222"/></svg>
<svg class="a" style="left:1024px;top:90px" width="10" height="13"><rect x="2" y="1" width="6" height="6" fill="#20b040"/><rect x="1" y="6" width="8" height="2" fill="#109030"/><rect x="4.3" y="8" width="1.4" height="5" fill="#222"/></svg>
<svg class="a" style="left:1309px;top:90px" width="10" height="13"><rect x="2" y="1" width="6" height="6" fill="#20b040"/><rect x="1" y="6" width="8" height="2" fill="#109030"/><rect x="4.3" y="8" width="1.4" height="5" fill="#222"/></svg>
<div class="a" style="left:368px;top:106px;width:1050px;height:736px;border:1px solid #7ea3d8;background:#fff"></div>
<!-- open orders panel -->
<div class="a" style="left:369px;top:107px;width:339px;height:29px;background:linear-gradient(#e2eefd,#cde2fb 50%,#aecdf8)"></div>
<div class="a b db nw" style="left:377px;top:112px;font-size:16px;line-height:19px">Open Orders</div>
<div class="a" style="left:369px;top:136px;width:339px;height:30px;background:#dae8fc;border-top:1px solid #c0d6f4;border-bottom:1px solid #7ea3d8"></div>
<div class="a" style="left:372px;top:138px;width:154px;height:25px;background:#fff;border:1px solid #7ea3d8"></div>
<svg class="a" style="left:488px;top:142px" width="17" height="17"><circle cx="10.5" cy="6.5" r="4.5" fill="none" stroke="#3a78d0" stroke-width="2"/><path d="M7.5 9.5 L2 15" stroke="#2a5aa8" stroke-width="2.5"/></svg>
<svg class="a" style="left:512px;top:148px" width="8" height="5"><path d="M0 0 H8 L4 4.5Z" fill="#111"/></svg>
<div class="a" style="left:530px;top:139px;width:1px;height:23px;background:#7ea3d8"></div>
<div class="a" style="left:582px;top:139px;width:1px;height:23px;background:#7ea3d8"></div>
<div class="a" style="left:617px;top:139px;width:1px;height:23px;background:#7ea3d8"></div>
<div class="a" style="left:652px;top:139px;width:1px;height:23px;background:#7ea3d8"></div>
<svg class="a" style="left:537px;top:140px" width="20" height="21"><rect x="1" y="1" width="18" height="19" fill="#eef0f4" stroke="#7a8494"/><rect x="1" y="1" width="5" height="19" fill="#c8ccd4" stroke="#7a8494"/><path d="M8 6H17M8 10H17M8 14H17" stroke="#5a8ad8" stroke-width="1.5"/></svg>
<svg class="a" style="left:567px;top:148px" width="8" height="5"><path d="M0 0 H8 L4 4.5Z" fill="#111"/></svg>
<svg class="a" style="left:589px;top:141px" width="18" height="19"><circle cx="9" cy="6" r="4" fill="#f0b878"/><path d="M5 4 Q9 0 13 4 L13 5 Q9 2 5 5Z" fill="#c87a30"/><path d="M2 18 Q2 10 9 10 Q16 10 16 18Z" fill="#e8eef8" stroke="#b8c4d8" stroke-width="0.6"/><rect x="7" y="13" width="2" height="2" fill="#e03030"/></svg>
<svg class="a" style="left:622px;top:140px" width="21" height="21"><defs><radialGradient id="hg622" cx="0.45" cy="0.35" r="0.7"><stop offset="0" stop-color="#7ab0f0"/><stop offset="0.6" stop-color="#2a64c4"/><stop offset="1" stop-color="#1a4aa0"/></radialGradient></defs><circle cx="10.5" cy="10.5" r="9.7" fill="#a8c8f0"/><circle cx="10.5" cy="10.5" r="8.3" fill="url(#hg622)"/><text x="10.5" y="15.0" font-family="Liberation Sans" font-weight="bold" font-size="12" fill="#e8f0ff" text-anchor="middle">?</text></svg>
<svg class="a" style="left:657px;top:140px" width="23" height="21"><path d="M5 12 Q5 4 13 4 L13 1 L20 6.5 L13 12 L13 8.5 Q9 8 7 12Z" fill="#1a5ac0"/><path d="M18 9 Q18 17 10 17 L10 20 L3 14.5 L10 9 L10 12.5 Q14 13 16 9Z" fill="#2a7ae0"/></svg>
<div class="a" style="left:369px;top:166px;width:339px;height:24px;background:#dae8fc;border-bottom:1px solid #8aacdc"></div>
<div class="a nw" style="left:376px;top:168px;font-size:13.5px;line-height:17px;letter-spacing:0.15px">Arranged By: Type</div>
<svg class="a" style="left:375px;top:201px" width="14" height="13"><defs><linearGradient id="mg201" x1="0" y1="0" x2="1" y2="1"><stop offset="0" stop-color="#c8d2e2"/><stop offset="0.5" stop-color="#f4f7fb"/><stop offset="1" stop-color="#aab8cc"/></linearGradient></defs><rect x="1.5" y="1.5" width="11" height="10" rx="2" fill="url(#mg201)" stroke="#6a7a92"/><rect x="4" y="5.7" width="6" height="1.8" fill="#2a3a52"/></svg><div class="a b nw" style="left:393px;top:200px;font-size:14px;line-height:17px;color:#2658a8">Labs</div><div class="a" style="left:369px;top:219px;width:339px;height:3px;background:#6f97d2;border-bottom:1px solid #b8cef0"></div><svg class="a" style="left:374px;top:224px" width="18" height="18"><path d="M1.5 17.5 Q1 10.5 9 10.5 Q17 10.5 16.5 17.5Z" fill="#d2461e"/><path d="M4 14 Q6 12 9 13" stroke="#f08a40" stroke-width="1.2" fill="none"/><ellipse cx="9" cy="6.5" rx="3.8" ry="4.3" fill="#f6c078"/><path d="M4.8 6 Q4.5 1 9 1 Q13.5 1 13.2 6 Q12 3.5 9 3.5 Q6 3.5 4.8 6Z" fill="#b8862a"/></svg><div class="a nw" style="left:394px;top:225px;font-size:13.5px;line-height:17px;color:#8c8c8c;letter-spacing:0.17px">Smith, Michael &nbsp;Male &nbsp;Age: 46y &nbsp;DOB: 03/11/1968</div><div class="a" style="left:369px;top:247px;width:339px;height:22px;background:#b4c9e7"></div><div class="a nw" style="left:407px;top:249.0px;font-size:13.5px;line-height:17px">Labs</div><div class="a nw" style="left:494px;top:249.0px;font-size:13.5px;line-height:17px">Basic Metabolic Panel (8)</div><div class="a nw" style="left:407px;top:271.5px;font-size:13.5px;line-height:17px">Labs</div><div class="a nw" style="left:494px;top:271.5px;font-size:13.5px;line-height:17px;letter-spacing:-0.3px">QUESTASSURED 25-OH VIT. D</div><div class="a nw" style="left:407px;top:294.0px;font-size:13.5px;line-height:17px">Labs</div><div class="a nw" style="left:494px;top:294.0px;font-size:13.5px;line-height:17px;letter-spacing:-0.3px">HEMOGLOBIN A1C</div><div class="a nw" style="left:407px;top:316.5px;font-size:13.5px;line-height:17px">Labs</div><div class="a nw" style="left:494px;top:316.5px;font-size:13.5px;line-height:17px;letter-spacing:-0.3px">URINALYSIS,REFLEX</div><div class="a nw" style="left:407px;top:339.0px;font-size:13.5px;line-height:17px">Labs</div><div class="a nw" style="left:494px;top:339.0px;font-size:13.5px;line-height:17px;letter-spacing:-0.3px">CBC (INCLUDES DIFF/PLT)</div><div class="a nw" style="left:407px;top:361.5px;font-size:13.5px;line-height:17px">Labs</div><div class="a nw" style="left:494px;top:361.5px;font-size:13.5px;line-height:17px;letter-spacing:-0.3px">TSH W/REFL FREE T4</div><div class="a nw" style="left:407px;top:384.0px;font-size:13.5px;line-height:17px">Labs</div><div class="a nw" style="left:494px;top:384.0px;font-size:13.5px;line-height:17px;letter-spacing:-0.3px">T4,FREE</div><div class="a nw" style="left:407px;top:406.5px;font-size:13.5px;line-height:17px">Labs</div><div class="a nw" style="left:494px;top:406.5px;font-size:13.5px;line-height:17px;letter-spacing:-0.3px">LIPID PANEL</div><div class="a nw" style="left:407px;top:429.0px;font-size:13.5px;line-height:17px">Labs</div><div class="a nw" style="left:494px;top:429.0px;font-size:13.5px;line-height:17px;letter-spacing:-0.3px">COMP METAB PANEL</div><div class="a nw" style="left:407px;top:451.5px;font-size:13.5px;line-height:17px">Labs</div><div class="a nw" style="left:494px;top:451.5px;font-size:13.5px;line-height:17px;letter-spacing:0.15px">Comp. Drug Profile, Ur, 9 Drugs</div><div class="a" style="left:369px;top:472px;width:339px;height:1px;background:#d6e6fa"></div><svg class="a" style="left:375px;top:484px" width="14" height="13"><defs><linearGradient id="mg484" x1="0" y1="0" x2="1" y2="1"><stop offset="0" stop-color="#c8d2e2"/><stop offset="0.5" stop-color="#f4f7fb"/><stop offset="1" stop-color="#aab8cc"/></linearGradient></defs><rect x="1.5" y="1.5" width="11" height="10" rx="2" fill="url(#mg484)" stroke="#6a7a92"/><rect x="4" y="5.7" width="6" height="1.8" fill="#2a3a52"/></svg><div class="a b nw" style="left:393px;top:483px;font-size:14px;line-height:17px;color:#2658a8">Scheduling</div><div class="a" style="left:369px;top:502px;width:339px;height:3px;background:#6f97d2;border-bottom:1px solid #b8cef0"></div><svg class="a" style="left:374px;top:507px" width="18" height="18"><path d="M1.5 17.5 Q1 10.5 9 10.5 Q17 10.5 16.5 17.5Z" fill="#d2461e"/><path d="M4 14 Q6 12 9 13" stroke="#f08a40" stroke-width="1.2" fill="none"/><ellipse cx="9" cy="6.5" rx="3.8" ry="4.3" fill="#f6c078"/><path d="M4.8 6 Q4.5 1 9 1 Q13.5 1 13.2 6 Q12 3.5 9 3.5 Q6 3.5 4.8 6Z" fill="#b8862a"/></svg><div class="a nw" style="left:394px;top:508px;font-size:13.5px;line-height:17px;color:#8c8c8c;letter-spacing:0.17px">Smith, Michael &nbsp;Male &nbsp;Age: 46y &nbsp;DOB: 03/11/1968</div><div class="a nw" style="left:407px;top:532px;font-size:13.5px;line-height:17px">Scheduling</div><div class="a nw" style="left:494px;top:532px;font-size:13.5px;line-height:17px">1 month</div><div class="a" style="left:369px;top:552px;width:339px;height:1px;background:#d6e6fa"></div><svg class="a" style="left:375px;top:564px" width="14" height="13"><defs><linearGradient id="mg564" x1="0" y1="0" x2="1" y2="1"><stop offset="0" stop-color="#c8d2e2"/><stop offset="0.5" stop-color="#f4f7fb"/><stop offset="1" stop-color="#aab8cc"/></linearGradient></defs><rect x="1.5" y="1.5" width="11" height="10" rx="2" fill="url(#mg564)" stroke="#6a7a92"/><rect x="4" y="5.7" width="6" height="1.8" fill="#2a3a52"/></svg><div class="a b nw" style="left:393px;top:563px;font-size:14px;line-height:17px;color:#2658a8">Referrals</div><div class="a" style="left:369px;top:582px;width:339px;height:3px;background:#6f97d2;border-bottom:1px solid #b8cef0"></div><svg class="a" style="left:374px;top:587px" width="18" height="18"><path d="M1.5 17.5 Q1 10.5 9 10.5 Q17 10.5 16.5 17.5Z" fill="#d2461e"/><path d="M4 14 Q6 12 9 13" stroke="#f08a40" stroke-width="1.2" fill="none"/><ellipse cx="9" cy="6.5" rx="3.8" ry="4.3" fill="#f6c078"/><path d="M4.8 6 Q4.5 1 9 1 Q13.5 1 13.2 6 Q12 3.5 9 3.5 Q6 3.5 4.8 6Z" fill="#b8862a"/></svg><div class="a nw" style="left:394px;top:588px;font-size:13.5px;line-height:17px;color:#8c8c8c;letter-spacing:0.17px">Smith, Michael &nbsp;Male &nbsp;Age: 46y &nbsp;DOB: 03/11/1968</div><div class="a nw" style="left:407px;top:612px;font-size:13.5px;line-height:17px">Referrals</div><div class="a nw" style="left:494px;top:612px;font-size:13.5px;line-height:17px">Nutritionist Referral</div><div class="a" style="left:369px;top:632px;width:339px;height:1px;background:#d6e6fa"></div>
<div class="a" style="left:369px;top:820px;width:338px;height:21px;background:#dae8fc;border-top:1px solid #7ea3d8"></div>
<div class="a b db nw" style="left:374px;top:821px;font-size:13.5px;line-height:17px">12 Items</div>
<div class="a" style="left:707px;top:107px;width:4px;height:734px;background:linear-gradient(#b4d0f6,#a8c6f0 40%,#86aae0 75%,#7a9fd6)"></div>
<!-- details -->
<div class="a" style="left:711px;top:107px;width:706px;height:29px;background:#dae8fc;border-bottom:1px solid #7ea3d8"></div>
<div class="a" style="left:746px;top:109px;width:1px;height:24px;background:#7ea3d8"></div><div class="a" style="left:781px;top:109px;width:1px;height:24px;background:#7ea3d8"></div><div class="a" style="left:816px;top:109px;width:1px;height:24px;background:#7ea3d8"></div><div class="a" style="left:851px;top:109px;width:1px;height:24px;background:#7ea3d8"></div><div class="a" style="left:886px;top:109px;width:1px;height:24px;background:#7ea3d8"></div><div class="a" style="left:921px;top:109px;width:1px;height:24px;background:#7ea3d8"></div><div class="a" style="left:973px;top:109px;width:1px;height:24px;background:#7ea3d8"></div><div class="a" style="left:1008px;top:109px;width:1px;height:24px;background:#7ea3d8"></div><div class="a" style="left:1043px;top:109px;width:1px;height:24px;background:#7ea3d8"></div><div class="a" style="left:1078px;top:109px;width:1px;height:24px;background:#7ea3d8"></div><div class="a" style="left:1113px;top:109px;width:1px;height:24px;background:#7ea3d8"></div>
<svg class="a" style="left:718px;top:111px" width="20" height="20"><rect x="1" y="1" width="18" height="18" rx="1" fill="#7a62b8"/><rect x="4" y="2" width="12" height="7" fill="#f0f0f4"/><path d="M5 4H15M5 6.5H15" stroke="#b0b0c0" stroke-width="0.8"/><rect x="6" y="12" width="8" height="7" fill="#ececf4"/><rect x="8" y="14" width="2" height="4" fill="#7a62b8"/></svg>
<svg class="a" style="left:752px;top:111px" width="21" height="20"><rect x="5" y="1" width="11" height="6" fill="#fff" stroke="#999"/><rect x="1" y="6" width="19" height="9" rx="1.5" fill="#a8acb4" stroke="#7a7e86"/><rect x="5" y="12" width="11" height="7" fill="#f4f8ff" stroke="#999"/><rect x="16" y="9" width="2" height="1.5" fill="#2c2"/></svg>
<svg class="a" style="left:789px;top:111px" width="16" height="20"><path d="M4 7 V15 Q4 19 8 19 Q12 19 12 15 V5 Q12 1.5 9 1.5 Q6 1.5 6 5 V14 Q6 16 8 16 Q10 16 10 14 V7" stroke="#8a8e96" stroke-width="1.6" fill="none"/></svg>
<svg class="a" style="left:821px;top:111px" width="22" height="20"><rect x="5" y="6" width="4" height="12" fill="#3a7ad8"/><rect x="9" y="2" width="4" height="16" fill="#f0c030"/><rect x="13" y="4" width="4" height="14" fill="#d84a2a"/><path d="M1 19H21" stroke="#333" stroke-width="1.5"/><path d="M2 19 V4 L5 1" stroke="#555" fill="none"/></svg>
<svg class="a" style="left:857px;top:111px" width="20" height="20"><path d="M7 1H13 M8 1 V7 L2 18 Q2 19 3 19 H17 Q18 19 18 18 L12 7 V1" fill="#eef2f6" stroke="#9aa" stroke-width="1"/><path d="M5 12 L15 12 L17.5 18 H2.5Z" fill="#4ab84a"/></svg>
<svg class="a" style="left:892px;top:112px" width="21" height="18"><rect x="1" y="1" width="19" height="16" rx="2" fill="#f4f4f6" stroke="#99a"/><circle cx="7" cy="7" r="2.5" fill="#e8a060"/><path d="M3 14 Q3 10 7 10 Q11 10 11 14Z" fill="#e03a2a"/><path d="M13 5H18M13 8H18M13 12H18" stroke="#6a8ad8"/></svg>
<svg class="a" style="left:927px;top:111px" width="20" height="20"><circle cx="10" cy="10" r="5.5" fill="none" stroke="#333" stroke-width="1.5"/><path d="M10 1V19M1 10H19" stroke="#222" stroke-width="1.5"/><circle cx="10" cy="10" r="1.5" fill="#fff"/></svg>
<svg class="a" style="left:960px;top:119px" width="8" height="5"><path d="M0 0 H8 L4 4.5Z" fill="#111"/></svg>
<svg class="a" style="left:980px;top:111px" width="19" height="19"><path d="M2 2 L17 17 M17 2 L2 17" stroke="#e8a0a0" stroke-width="2.5"/></svg>
<svg class="a" style="left:1014px;top:111px" width="21" height="20"><rect x="1" y="1" width="19" height="18" fill="#f0f2f6" stroke="#b8c0cc"/><path d="M1 6H20M1 11H20M1 15H20M7 6V19M14 6V19" stroke="#c4ccd8"/></svg>
<svg class="a" style="left:1049px;top:111px" width="20" height="20"><circle cx="10" cy="10" r="8.5" fill="#e8f0fa" stroke="#8a949e" stroke-width="1.8"/><path d="M6 8 L10 12 L14 8" stroke="#333" stroke-width="1.5" fill="none"/></svg>
<svg class="a" style="left:1083px;top:110px" width="22" height="22"><defs><radialGradient id="hg1083" cx="0.45" cy="0.35" r="0.7"><stop offset="0" stop-color="#7ab0f0"/><stop offset="0.6" stop-color="#2a64c4"/><stop offset="1" stop-color="#1a4aa0"/></radialGradient></defs><circle cx="11.0" cy="11.0" r="10.2" fill="#a8c8f0"/><circle cx="11.0" cy="11.0" r="8.8" fill="url(#hg1083)"/><text x="11.0" y="15.5" font-family="Liberation Sans" font-weight="bold" font-size="12" fill="#e8f0ff" text-anchor="middle">?</text></svg>
<div class="a" style="left:1120px;top:107px;width:276px;height:28px;overflow:hidden"><div class="a nw" style="left:106px;top:5px;font-size:13.5px;line-height:17px;color:#2a5198;letter-spacing:0.25px">Order #: 2281 &nbsp;Requisition ID: 1</div></div>
<!-- scrollbars -->
<div class="a" style="left:1396px;top:107px;width:21px;height:713px;background:#f0f0f0"></div>
<div class="a" style="left:1398px;top:150px;width:17px;height:610px;background:#c8c8c8"></div>
<svg class="a" style="left:1399px;top:126px" width="16" height="14"><path d="M1.5 11.5 L8 4 L14.5 11.5" stroke="#555" stroke-width="3.2" fill="none"/></svg>
<svg class="a" style="left:1399px;top:786px" width="16" height="14"><path d="M1.5 2.5 L8 10 L14.5 2.5" stroke="#555" stroke-width="3.2" fill="none"/></svg>
<div class="a" style="left:711px;top:820px;width:706px;height:21px;background:#f0f0f0"></div>
<div class="a" style="left:753px;top:821px;width:510px;height:19px;background:#c8c8c8"></div>
<svg class="a" style="left:730px;top:822px" width="14" height="16"><path d="M11 1.5 L4 8 L11 14.5" stroke="#555" stroke-width="3.2" fill="none"/></svg>
<svg class="a" style="left:1362px;top:822px" width="14" height="16"><path d="M3 1.5 L10 8 L3 14.5" stroke="#555" stroke-width="3.2" fill="none"/></svg>
<!-- content -->
<div class="a b nw" style="left:725px;top:144px;font-size:16.8px;line-height:20px;letter-spacing:0.2px">Basic Metabolic Panel (8)</div>
<div class="a nw" style="left:725px;top:167px;font-size:15.8px;line-height:19px">Smith, Michael</div>
<div class="a nw" style="left:725px;top:192px;font-size:13.5px;line-height:17px">Male, Age: &nbsp;46y</div>
<div class="a" style="left:722px;top:211px;width:674px;height:18px;background:#efefef"></div>
<div class="a nw" style="left:725px;top:210px;font-size:13.5px;line-height:17px">This order is part of an 2 part order requisition.</div>
<div class="a" style="left:725px;top:234px;width:671px;height:2px;background:#c8c8c8"></div>
<div class="a b nw" style="left:746px;top:242px;font-size:14.5px;line-height:17px">Priority:</div><div class="a nw" style="left:846px;top:242px;font-size:13.5px;line-height:17px">Normal.</div><div class="a b nw" style="left:746px;top:275px;font-size:14.5px;line-height:17px">Appointment:</div><div class="a nw" style="left:846px;top:276px;font-size:13.5px;line-height:17px">LABCORP at 05/02/2014 00:00am.</div><svg class="a" style="left:1066px;top:275px" width="16" height="16"><circle cx="8" cy="8" r="4.5" fill="none" stroke="#888" stroke-width="1.3"/><path d="M8 1V15M1 8H15" stroke="#777" stroke-width="1.3"/></svg><div class="a nw" style="left:846px;top:294px;font-size:13.5px;line-height:17px"><span style="text-decoration:underline">Lab Instructions:</span>&nbsp; DO NOT change this panel in anyway.</div><div class="a b nw" style="left:746px;top:325px;font-size:14.5px;line-height:17px">Processor:</div><div class="a nw" style="left:846px;top:325px;font-size:13.5px;line-height:17px">eLabs (<span style="text-decoration:underline">Open</span>)</div><div class="a b nw" style="left:746px;top:355px;font-size:14.5px;line-height:17px">Rendering:</div><div class="a nw" style="left:846px;top:355px;font-size:13.5px;line-height:17px">Frank, Ann MD</div><div class="a b nw" style="left:1019px;top:355px;font-size:14.5px;line-height:17px">Referring:</div><div class="a nw" style="left:1106px;top:355px;font-size:13.5px;line-height:17px">Hall, Isabella MD</div><div class="a" style="left:1280px;top:351px;width:116px;height:24px;overflow:hidden"><div class="a b nw" style="left:5px;top:4px;font-size:14.5px;line-height:17px">ICD9:</div><div class="a nw" style="left:55px;top:4px;font-size:13.5px;line-height:17px">250.02, 585.1</div></div><div class="a b nw" style="left:746px;top:387px;font-size:14.5px;line-height:17px">Responsible:</div><div class="a nw" style="left:846px;top:387px;font-size:13.5px;line-height:17px">Smith, Michael</div><div class="a b nw" style="left:1019px;top:387px;font-size:14.5px;line-height:17px">Insurance:</div><div class="a nw" style="left:1110px;top:387px;font-size:13.5px;line-height:17px">Bill Type: Patient Bill</div><div class="a b nw" style="left:1285px;top:387px;font-size:14.5px;line-height:17px">Auth:</div><div class="a" style="left:725px;top:816px;width:200px;height:4px;overflow:hidden"><div class="a nw" style="left:5px;top:0px;font-size:13px;line-height:14px;color:#aaa">View HL7 File</div></div></body></html>
